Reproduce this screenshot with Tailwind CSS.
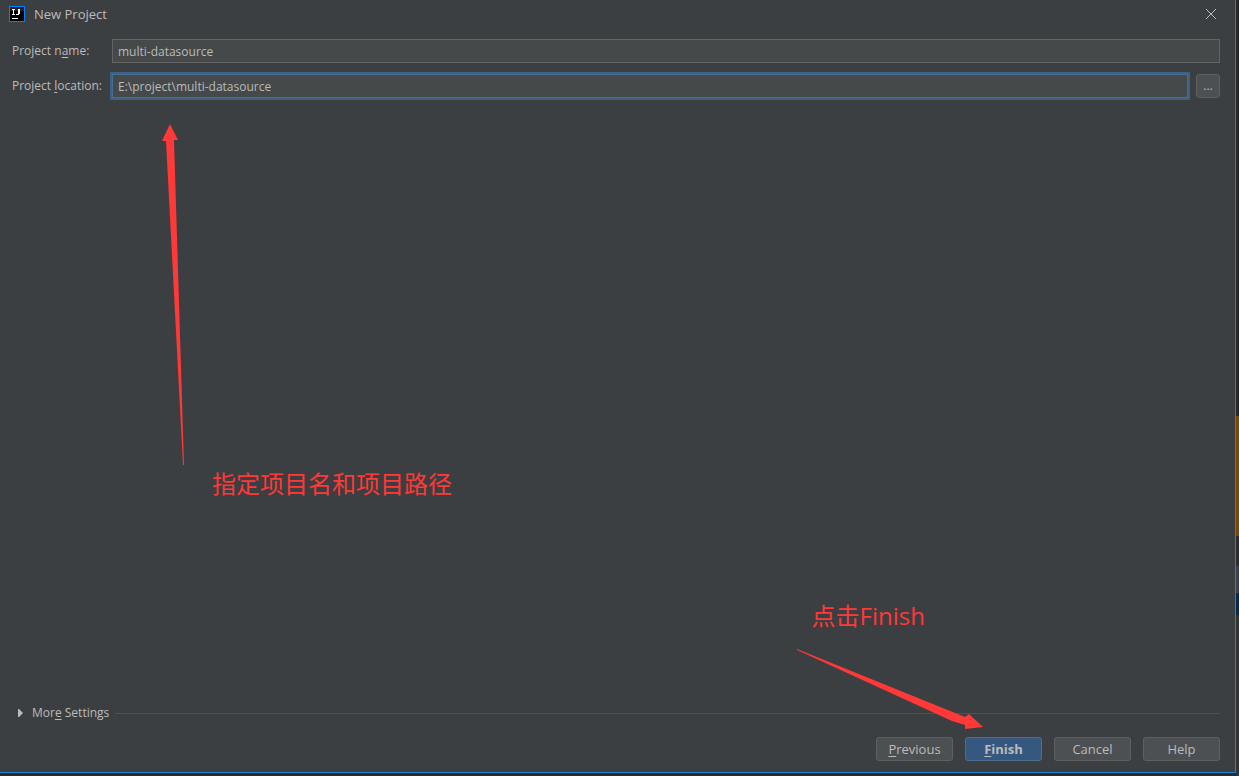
<!DOCTYPE html>
<html lang="zh-CN">
<head>
  <meta charset="UTF-8">
  <meta name="viewport" content="width=device-width, initial-scale=1.0">
  <title>New Project</title>
  <script src="https://cdn.jsdelivr.net/npm/@tailwindcss/browser@4"></script>
</head>
<body class="relative flex h-screen overflow-hidden bg-[#2b2b2b] font-['Open_Sans','Noto_Sans_CJK_SC',sans-serif] text-[13px] leading-5 text-[#bbbbbb]">

  <!-- Dialog -->
  <div class="relative mb-[3px] flex min-w-0 flex-1 flex-col border-r border-b border-[#1585dd] bg-[#3c3f41]">

    <!-- Title bar -->
    <header class="flex h-7 items-center pr-[18px] pl-[9px]">
      <svg class="h-4 w-4" viewBox="0 0 16 16" shape-rendering="crispEdges">
        <rect width="16" height="16" fill="#087cfa"/>
        <rect x="1" y="1" width="14" height="14" fill="#000"/>
        <rect x="1" y="1" width="14" height="4" fill="#222"/>
        <path d="M3 3h3v1H5v4h1v1H3V8h1V4H3zM9 3h2v5h-1v1H7V8h2zM3 12h6v1H3z" fill="#fff"/>
      </svg>
      <h1 class="ml-[9px] flex-1">New Project</h1>
      <button type="button" aria-label="Close" class="flex h-5 w-3 items-center justify-center">
        <svg class="h-3 w-3" viewBox="0 0 12 12" fill="none" stroke="#bbbbbb" stroke-width="1"><path d="M1 1l10 10M11 1L1 11"/></svg>
      </button>
    </header>

    <!-- Form -->
    <form class="mt-[11px] mr-[15px] ml-3 flex flex-col gap-[11px] text-xs leading-5">
      <div class="flex h-6 items-center">
        <label for="name" class="w-[100px] shrink-0 whitespace-nowrap">Project n<u class="underline-offset-2">a</u>me:</label>
        <input id="name" type="text" value="multi-datasource" class="h-6 min-w-0 flex-1 border border-[#646464] bg-[#45494a] px-[5px] outline-none">
      </div>
      <div class="flex h-6 items-center">
        <label for="location" class="w-[100px] shrink-0 whitespace-nowrap">Project <u class="underline-offset-2">l</u>ocation:</label>
        <input id="location" type="text" value="E:\project\multi-datasource" class="h-6 min-w-0 flex-1 border border-[#466d94] bg-[#45494a] px-[5px] ring-2 ring-[#3d6185] outline-none">
        <button type="button" class="ml-2 h-6 w-6 rounded-[3px] border border-[#5e6060] bg-[#4c5052]">...</button>
      </div>
    </form>

    <!-- More settings -->
    <div class="mt-auto mr-[15px] ml-[17px] flex items-center">
      <button type="button" class="flex items-center">
        <svg class="mr-[9px] h-2 w-[6px]" viewBox="0 0 6 8" fill="#bbbbbb"><path d="M1 0h1l4 4-4 4H1z"/></svg>
        <span class="text-xs leading-5">Mor<u class="underline-offset-2">e</u> Settings</span>
      </button>
      <div class="ml-[6px] h-px flex-1 bg-[#515151]"></div>
    </div>

    <!-- Buttons -->
    <footer class="mt-[14px] mr-[15px] mb-[11px] flex justify-end gap-3">
      <button type="button" class="h-6 w-[77px] rounded-[3px] border border-[#5e6060] bg-[#4c5052]"><u class="underline-offset-2">P</u>revious</button>
      <button type="button" class="h-6 w-[77px] rounded-[3px] border border-[#4c708c] bg-[#365880] font-bold"><u class="underline-offset-2">F</u>inish</button>
      <button type="button" class="h-6 w-[77px] rounded-[3px] border border-[#5e6060] bg-[#4c5052]">Cancel</button>
      <button type="button" class="h-6 w-[77px] rounded-[3px] border border-[#5e6060] bg-[#4c5052]">Help</button>
    </footer>

    <!-- Notes drawn over the dialog -->
    <svg class="pointer-events-none absolute top-[124px] left-[160px] h-[342px] w-[26px]" viewBox="0 0 26 342" fill="#ff3838">
      <path d="M10 0L18 16L14 16L24 341H23L6 17H2z"/>
    </svg>
    <p class="absolute top-[466px] left-[212px] text-2xl leading-9 whitespace-nowrap text-[#ff3838]">指定项目名和项目路径</p>
    <p class="absolute right-[310px] bottom-[138px] text-2xl leading-9 whitespace-nowrap text-[#ff3838]">点击Finish</p>
    <svg class="pointer-events-none absolute right-[251px] bottom-[42px] h-[82px] w-[187px]" viewBox="0 0 187 82" fill="#ff3838">
      <path d="M0 1L168 69L172 66L186 79L168 81L168 77L155 73L0 2z"/>
    </svg>
  </div>

  <!-- Strip of the desktop behind -->
  <div class="flex w-[3px] flex-col bg-[#2b2b2b]">
    <div class="h-[416px] bg-[#25282a]"></div>
    <div class="h-[120px] bg-[#7f4600]"></div>
    <div class="h-[30px] bg-[#2b2d2f]"></div>
    <div class="h-[27px] bg-[#3a4350]"></div>
    <div class="h-[22px] bg-[#062a4c]"></div>
    <div class="flex-1 bg-[#313335]"></div>
  </div>

</body>
</html>
